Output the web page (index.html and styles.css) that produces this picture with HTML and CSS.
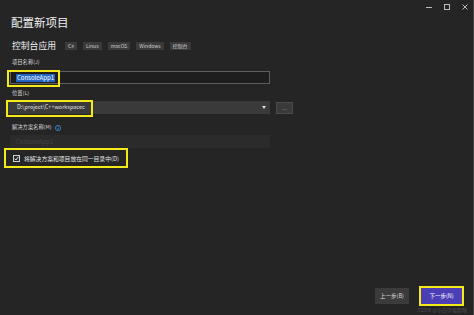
FILE: index.html
```html
<!DOCTYPE html>
<html lang="zh-CN">

<head>
    <meta charset="UTF-8">
    <meta name="viewport" content="width=device-width, initial-scale=1.0">
    <title>配置新项目</title>
    <link rel="stylesheet" href="styles.css">
</head>

<body>
    <div class="window">
        <div class="titlebar">
            <span class="ctl">
                <svg width="6" height="6" viewBox="0 0 6 6"><path d="M0 3.5h6" stroke="#bbb" stroke-width="1"/></svg>
            </span>
            <span class="ctl">
                <svg width="6" height="6" viewBox="0 0 6 6"><rect x="0.5" y="0.5" width="5" height="5" fill="none" stroke="#bbb" stroke-width="1"/></svg>
            </span>
            <span class="ctl">
                <svg width="6" height="6" viewBox="0 0 6 6"><path d="M0.5 0.5l5 5M5.5 0.5l-5 5" stroke="#bbb" stroke-width="1"/></svg>
            </span>
        </div>

        <div class="content">
            <h1>配置新项目</h1>

            <div class="app-row">
                <h2>控制台应用</h2>
                <span class="tag">C#</span>
                <span class="tag">Linux</span>
                <span class="tag">macOS</span>
                <span class="tag">Windows</span>
                <span class="tag">控制台</span>
            </div>

            <div class="form-group first">
                <label>项目名称(J)</label>
                <div class="field">
                    <span class="selected">ConsoleApp1</span>
                    <span class="mark mark-name"></span>
                </div>
            </div>

            <div class="form-group">
                <label>位置(L)</label>
                <div class="loc-row">
                    <div class="field select">
                        <span>D:\project\C++workspacec</span>
                        <span class="arrow">
                            <svg width="4" height="3" viewBox="0 0 4 3"><path d="M0 0h4L2 3z" fill="#ddd"/></svg>
                        </span>
                        <span class="mark mark-loc"></span>
                    </div>
                    <button class="browse">...</button>
                </div>
            </div>

            <div class="form-group third">
                <label>解决方案名称(M)
                    <svg class="info" width="6" height="6" viewBox="0 0 10 10"><circle cx="5" cy="5" r="4.3" fill="none" stroke="#3d9be9" stroke-width="1.3"/><path d="M5 4.2v3.2" stroke="#3d9be9" stroke-width="1.4"/><circle cx="5" cy="2.7" r="0.8" fill="#3d9be9"/></svg>
                </label>
                <div class="field disabled">ConsoleApp1</div>
            </div>

            <div class="check-row">
                <span class="checkbox">
                    <svg width="5" height="5" viewBox="0 0 6 6"><path d="M0.8 3.2l1.5 1.6L5.2 1" fill="none" stroke="#eee" stroke-width="1.2"/></svg>
                </span>
                <span>将解决方案和项目放在同一目录中(D)</span>
            </div>
        </div>

        <div class="footer">
            <button class="btn">上一步(B)</button>
            <button class="btn primary">下一步(N)</button>
        </div>
        <div class="watermark">CSDN @小白学编程呀</div>
    </div>
</body>

</html>
```

FILE: styles.css
```css
body {
    margin: 0;
    background-color: #252526;
    font-family: "Noto Sans CJK SC", "Noto Sans", sans-serif;
    color: #e6e6e6;
}

.window {
    position: relative;
    height: 315px;
    box-sizing: border-box;
    border-right: 1px solid #444;
    display: flex;
    flex-direction: column;
}

.titlebar {
    display: flex;
    justify-content: flex-end;
    gap: 12px;
    padding: 4px 5px 0 0;
    height: 7px;
}

.ctl {
    display: flex;
    width: 6px;
    height: 6px;
}

.content {
    flex: 1;
    padding: 0 10px;
}

h1 {
    margin: 4px 0 0 1px;
    font-size: 11.5px;
    line-height: 14px;
    font-weight: normal;
    color: #f2f2f2;
}

.app-row {
    display: flex;
    align-items: center;
    gap: 5px;
    height: 12px;
    margin: 11px 0 0 2px;
}

h2 {
    margin: 0 4px 0 0;
    font-size: 8.8px;
    line-height: 12px;
    font-weight: normal;
    color: #f2f2f2;
}

.tag {
    background-color: #3a3a3a;
    color: #cfcfcf;
    font-size: 5px;
    line-height: 8px;
    padding: 0 3px;
    margin-right: 1px;
}

.form-group {
    margin-top: 6px;
}

.form-group.first {
    margin-top: 7px;
}

.form-group.third {
    margin-top: 10px;
}

.form-group label {
    display: flex;
    align-items: center;
    gap: 2px;
    font-size: 5.3px;
    line-height: 7px;
    margin: 0 0 4px 2px;
    color: #d8d8d8;
}

.form-group.first label {
    margin-bottom: 5px;
}

.info {
    margin-left: 1px;
}

.field {
    position: relative;
    width: 260px;
    height: 13px;
    box-sizing: border-box;
    border: 1px solid #5e5e5e;
    background-color: #1e1e1e;
    font-size: 6px;
    line-height: 11px;
    padding-left: 5px;
    color: #e0e0e0;
    display: flex;
    align-items: center;
}

.selected {
    background-color: #2266c4;
    color: #fff;
    padding: 0 1px;
    line-height: 8px;
}

.mark {
    position: absolute;
    border: 2px solid #f3ea18;
}

.mark-name {
    left: -4px;
    top: -2px;
    width: 49px;
    height: 13px;
}

.loc-row {
    display: flex;
    align-items: center;
    gap: 6px;
}

.select {
    width: 262px;
    margin-left: -2px;
    background-color: #3a3a3a;
    border-color: #3a3a3a;
    padding-left: 8px;
    font-size: 5.5px;
}

.arrow {
    position: absolute;
    right: 3px;
    top: 4px;
    display: flex;
}

.mark-loc {
    left: -3px;
    top: -2px;
    width: 83px;
    height: 13px;
}

.browse {
    width: 17px;
    height: 12px;
    padding: 0;
    border: 1px solid #4a4a4a;
    background-color: #3a3a3a;
    color: #bbb;
    font-size: 5px;
    line-height: 6px;
}

.disabled {
    background-color: #2b2b2b;
    border-color: #2b2b2b;
    color: #454545;
}

.check-row {
    display: flex;
    align-items: center;
    gap: 4px;
    width: fit-content;
    height: 16px;
    margin: 0 0 0 -6px;
    padding: 0 7px 0 7px;
    border: 2px solid #f3ea18;
    font-size: 5.8px;
    color: #e6e6e6;
}

.checkbox {
    display: flex;
    align-items: center;
    justify-content: center;
    width: 7px;
    height: 7px;
    box-sizing: border-box;
    border: 1px solid #cfcfcf;
    background-color: #2a2a2a;
}

.footer {
    display: flex;
    justify-content: flex-end;
    gap: 12px;
    padding: 0 11px 11px 0;
}

.btn {
    width: 34px;
    height: 16px;
    padding: 0;
    border: none;
    background-color: #3b3b3b;
    color: #ddd;
    font-family: "Noto Sans CJK SC", sans-serif;
    font-size: 5.5px;
}

.primary {
    width: 41px;
    background-color: #4c3fb6;
    color: #fff;
    outline: 2px solid #f3ea18;
    outline-offset: 0;
}

.watermark {
    position: absolute;
    right: 6px;
    bottom: 2px;
    font-size: 5px;
    line-height: 6px;
    color: #505050;
}
```
